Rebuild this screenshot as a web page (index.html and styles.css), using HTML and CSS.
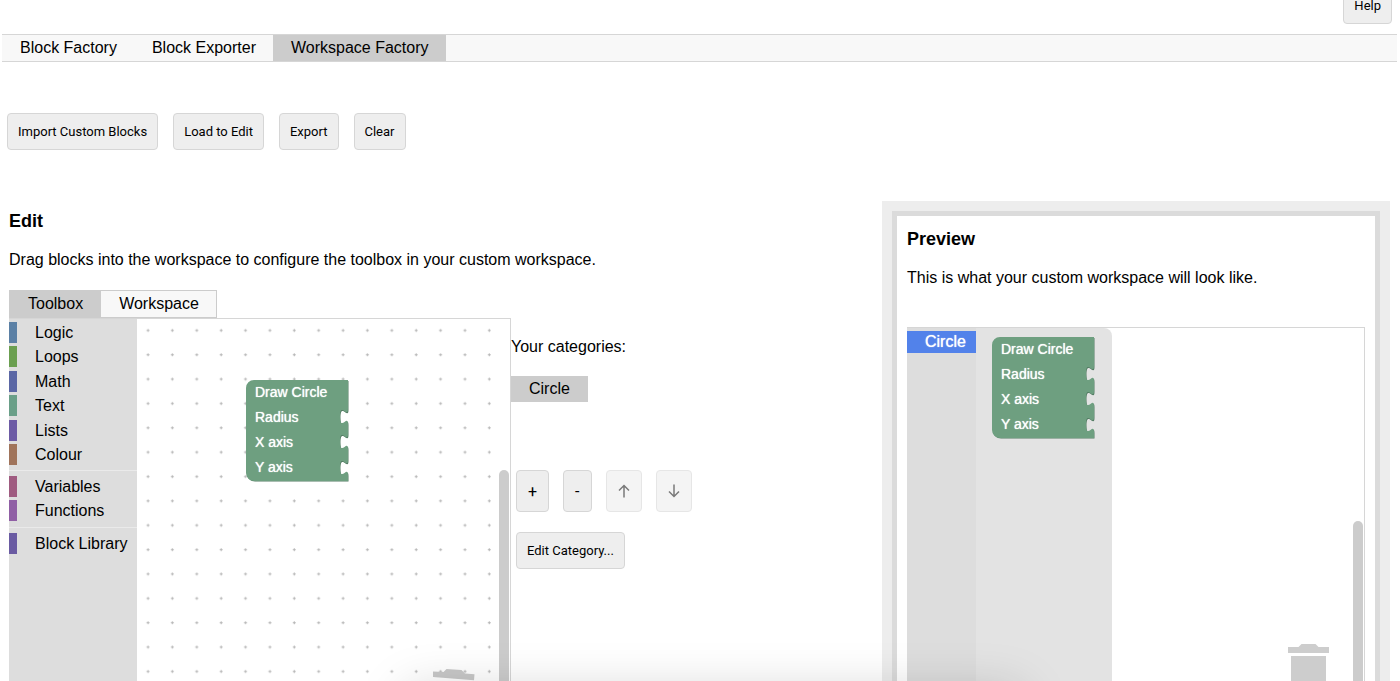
FILE: index.html
```html
<!DOCTYPE html>
<html lang="en">
<head>
    <meta charset="UTF-8">
    <meta name="viewport" content="width=device-width, initial-scale=1.0">
    <title>Blockly Developer Tools</title>

    <link rel="stylesheet" href="styles.css">
</head>
<body>

    <!-- Shared shapes -->
    <svg class="defs" aria-hidden="true">
        <symbol id="circleBlock" viewBox="0 0 103 102">
            <path fill="#557c64" d="M1 9a8 8 0 0 1 8-8H102.500V30c0 10-8-8-8 7.500s8-2.500 8 7.500V55c0 10-8-8-8 7.500s8-2.500 8 7.500V81c0 10-8-8-8 7.500s8-2.500 8 7.500V101.500H9a8 8 0 0 1-8-8z"/>
            <path fill="#6e9f80" d="M0 8a8 8 0 0 1 8-8H102V29c0 10-8-8-8 7.500s8-2.500 8 7.500V54c0 10-8-8-8 7.500s8-2.500 8 7.500V80c0 10-8-8-8 7.500s8-2.500 8 7.500V101H8a8 8 0 0 1-8-8z"/>
        </symbol>
        <pattern id="dots" width="24.380" height="24.360" patternUnits="userSpaceOnUse">
            <path d="M9.500 11.500h3M11 10v3" stroke="#b4b4b4"/>
        </pattern>
    </svg>

    <header>
        <button type="button">Help</button>
    </header>

    <nav class="tabs">
        <a href="#blockFactory">Block Factory</a>
        <a href="#blockExporter">Block Exporter</a>
        <a href="#workspaceFactory" class="tab-on">Workspace Factory</a>
    </nav>

    <div class="toolbar">
        <button type="button">Import Custom Blocks</button>
        <button type="button">Load to Edit</button>
        <button type="button">Export</button>
        <button type="button">Clear</button>
    </div>

    <main>
        <section class="edit">
            <h3>Edit</h3>
            <p>Drag blocks into the workspace to configure the toolbox in your custom workspace.</p>

            <div class="edit-tabs">
                <a href="#toolbox" class="tab-on">Toolbox</a>
                <a href="#workspace">Workspace</a>
            </div>

            <div class="editor">
                <div class="workspace">
                    <div class="toolbox">
                        <ul class="group group-main">
                            <li class="logic">Logic</li>
                            <li class="loops">Loops</li>
                            <li class="math">Math</li>
                            <li class="text">Text</li>
                            <li class="lists">Lists</li>
                            <li class="colour">Colour</li>
                        </ul>
                        <ul class="group">
                            <li class="variables">Variables</li>
                            <li class="functions">Functions</li>
                        </ul>
                        <ul class="group">
                            <li class="library">Block Library</li>
                        </ul>
                    </div>
                    <div class="canvas">
                        <svg class="dots" aria-hidden="true"><rect width="100%" height="100%" fill="url(#dots)"/></svg>
                        <div class="block">
                            <svg aria-hidden="true"><use href="#circleBlock"/></svg>
                            <span>Draw Circle</span>
                            <span>Radius</span>
                            <span>X axis</span>
                            <span>Y axis</span>
                        </div>
                        <svg class="trash" viewBox="0 0 42 12" width="42" height="12" aria-hidden="true">
                            <path fill="#c8c8c8" d="M0 2.500l10.500.5L13.500 0l15 1 3.500 3.500 9.500.7-.5 6L0 8z"/>
                        </svg>
                        <div class="scrollbar"></div>
                    </div>
                </div>

                <div class="categories">
                    <p>Your categories:</p>
                    <a href="#circle" class="category">Circle</a>
                    <div class="category-buttons">
                        <button type="button">+</button>
                        <button type="button">-</button>
                        <button type="button" disabled aria-label="Move up">
                            <svg viewBox="1 0 12 14" width="12" height="14"><path d="M7 13.500V1.500M2 6.500l5-5 5 5"/></svg>
                        </button>
                        <button type="button" disabled aria-label="Move down">
                            <svg viewBox="1 0 12 14" width="12" height="14"><path d="M7 .5v12M2 7.500l5 5 5-5"/></svg>
                        </button>
                    </div>
                    <button type="button" class="edit-category">Edit Category...</button>
                </div>
            </div>
        </section>

        <section class="preview">
            <div class="preview-inner">
                <h3>Preview</h3>
                <p>This is what your custom workspace will look like.</p>

                <div class="workspace">
                    <div class="preview-tree">
                        <a href="#circle">Circle</a>
                    </div>
                    <div class="flyout">
                        <div class="block">
                            <svg aria-hidden="true"><use href="#circleBlock"/></svg>
                            <span>Draw Circle</span>
                            <span>Radius</span>
                            <span>X axis</span>
                            <span>Y axis</span>
                        </div>
                    </div>
                    <div class="canvas">
                        <svg class="trash" viewBox="0 0 41 37" width="41" height="37" aria-hidden="true">
                            <path fill="#cdcdcd" d="M0 3h10.500l3-3h14l3 3H41v6H0zM3 12h35v25H3z"/>
                        </svg>
                        <div class="scrollbar"></div>
                    </div>
                </div>
            </div>
        </section>
    </main>

</body>
</html>
```
FILE: styles.css
```css
* {
    box-sizing: border-box;
}

body {
    display: flex;
    flex-direction: column;
    position: relative;
    height: 100vh;
    margin: 0;
    overflow: hidden;
    background-color: #fff;
    color: #000;
    font-family: "Liberation Sans", Arial, sans-serif;
    font-size: 16px;
    line-height: 18px;
}

/* Shadow rising from the lower edge of the window */
body::after {
    content: "";
    position: absolute;
    top: 100%;
    left: 29%;
    right: 27%;
    height: 100px;
    margin-top: 10px;
    box-shadow: 0 0 50px rgba(0, 0, 0, 0.18);
}

h3, p, ul {
    margin: 0;
    padding: 0;
}

h3 {
    font-size: 18px;
    line-height: 20px;
}

a {
    color: #000;
    text-decoration: none;
}

button {
    height: 37px;
    padding: 0 10px;
    border: 1px solid #d6d6d6;
    border-radius: 4px;
    background-color: #eee;
    color: #000;
    font-family: Roboto, sans-serif;
    font-size: 13px;
    cursor: pointer;
}

button:disabled {
    opacity: 0.6;
    cursor: default;
}

.defs {
    position: absolute;
    width: 0;
    height: 0;
}

header {
    display: flex;
    flex: none;
    justify-content: flex-end;
    align-items: flex-end;
    height: 34px;
    padding: 0 8px 10px;
}

/* Tabs */
.tabs {
    display: flex;
    flex: none;
    margin: 0 3px 0 2px;
    border-top: 1px solid #d6d6d6;
    border-bottom: 1px solid #d6d6d6;
    background-color: #f8f8f8;
}

.tabs a {
    padding: 4px 17px 4px 18px;
}

.tabs a.tab-on,
.edit-tabs a.tab-on {
    background-color: #ccc;
}

.toolbar {
    display: flex;
    flex: none;
    gap: 15px;
    padding: 51px 7px;
}

main {
    display: grid;
    flex: 1;
    grid-template-columns: 873fr 508fr;
    min-height: 0;
    margin: 0 10px 0 9px;
}

/* Edit */
.edit {
    display: flex;
    flex-direction: column;
    min-width: 0;
    padding-top: 10px;
}

.edit > p {
    margin: 20px 0 21px;
}

.edit-tabs {
    display: flex;
}

.edit-tabs a {
    padding: 4px 17px 4px 18px;
    border: 1px solid #ccc;
}

.edit-tabs a + a {
    border-left: 0;
    background-color: #f8f8f8;
}

.editor {
    display: grid;
    flex: 1;
    grid-template-columns: 502fr 371fr;
}

.workspace {
    display: flex;
    position: relative;
    border-top: 1px solid #d6d6d6;
    border-right: 1px solid #d6d6d6;
}

.toolbox {
    flex: none;
    width: 128px;
    background-color: #ddd;
}

.group {
    display: flex;
    flex-direction: column;
    gap: 3px;
    padding: 5px 0 6px;
    list-style: none;
}

.group + .group {
    border-top: 1px solid #eaeaea;
}

.group-main {
    justify-content: space-between;
    height: 151px;
    padding: 3px 0 5px;
}

.group li {
    height: 21px;
    padding-left: 18px;
    border-left: 8px solid #999;
    line-height: 21px;
    white-space: nowrap;
}

.group .logic { border-color: #5b80a5; }
.group .loops { border-color: #6b9f50; }
.group .math { border-color: #5b67a5; }
.group .text { border-color: #6a9f88; }
.group .lists { border-color: #6d5ba5; }
.group .colour { border-color: #a0745b; }
.group .variables { border-color: #9f5b80; }
.group .functions { border-color: #905fa5; }
.group .library { border-color: #6a5ba2; }

.canvas {
    position: relative;
    flex: 1;
    overflow: hidden;
}

.dots {
    display: block;
    position: absolute;
    width: 100%;
    height: 100%;
}

.block {
    position: relative;
    width: 103px;
    height: 102px;
    padding: 0 9px;
    color: #fff;
    font-size: 14px;
    line-height: 25px;
    text-shadow: 0 0 1px #fff;
}

.block svg {
    position: absolute;
    top: 0;
    left: 0;
    width: 103px;
    height: 102px;
}

.block span {
    display: block;
    position: relative;
}

.edit .block {
    position: absolute;
    top: 61px;
    left: 109px;
}

.scrollbar {
    position: absolute;
    right: 1px;
    bottom: -10px;
    width: 10px;
    border-radius: 5px;
    background-color: #ccc;
}

.edit .scrollbar {
    top: 151px;
}

.preview .scrollbar {
    top: 193px;
}

.trash {
    position: absolute;
    right: 35px;
    bottom: 0;
}

/* Categories */
.categories {
    padding-top: 20px;
}

.category {
    display: inline-block;
    margin: 20px 0 68px;
    padding: 4px 18px;
    background-color: #ccc;
}

.category-buttons {
    display: flex;
    gap: 14px;
    margin: 0 0 20px 5px;
}

.category-buttons button {
    height: 42px;
    padding: 0 11px;
    font-size: 16px;
}

.category-buttons svg {
    display: block;
    fill: none;
    stroke: #222;
    stroke-width: 1.5;
}

.edit-category {
    margin-left: 5px;
}

/* Preview */
.preview {
    display: flex;
    min-width: 0;
    border: 10px solid #ededed;
    border-bottom: 0;
}

.preview-inner {
    display: flex;
    flex: 1;
    flex-direction: column;
    padding: 13px 10px 0;
    border: 5px solid #dbdbdb;
    border-bottom: 0;
}

.preview p {
    margin: 20px 0 40px;
}

.preview .workspace {
    flex: 1;
}

.preview-tree {
    width: 69px;
    padding-top: 3px;
    background-color: #ddd;
}

.preview-tree a {
    display: block;
    padding-left: 18px;
    background-color: #5282ea;
    color: #fff;
    line-height: 22px;
    text-shadow: 0 0 1px #fff;
}

.flyout {
    width: 136px;
    padding: 9px 16px;
    border-top-right-radius: 8px;
    background-color: #e3e3e3;
}
```
